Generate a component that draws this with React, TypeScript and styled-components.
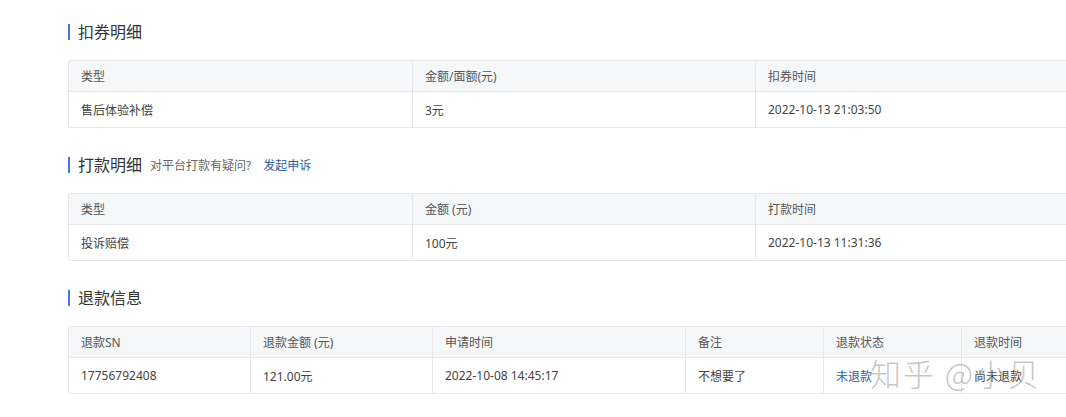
import styled, { createGlobalStyle } from "styled-components";

const GlobalStyle = createGlobalStyle`
  body {
    margin: 0;
    background: #ffffff;
    font-family: "Noto Sans", "Noto Sans CJK SC", sans-serif;
    color: #333333;
  }
`;

const Page = styled.div`
  position: relative;
  width: 1066px;
  height: 417px;
  overflow: hidden;
  padding: 22px 0 0 68px;
  box-sizing: border-box;
`;

const Section = styled.div`
  margin-bottom: 27px;
`;

const Heading = styled.div`
  display: flex;
  align-items: center;
  height: 20px;
  margin-bottom: 18px;
`;

const Title = styled.span`
  border-left: 2px solid #3d7be0;
  padding-left: 8px;
  font-size: 16px;
  line-height: 16px;
  color: #333333;
`;

const Hint = styled.span`
  margin-left: 8px;
  font-size: 12px;
  color: #666666;
`;

const HintLink = styled.a`
  margin-left: 12px;
  font-size: 12px;
  color: #2b5ca8;
  text-decoration: none;
`;

const Table = styled.table`
  width: 1032px;
  border-collapse: separate;
  border-spacing: 0;
  border: 1px solid #e6e8eb;
  border-radius: 2px;
  table-layout: fixed;
  font-size: 12px;
`;

const Th = styled.th<{ w?: number }>`
  box-sizing: border-box;
  width: ${(p) => (p.w ? `${p.w}px` : "auto")};
  height: 31px;
  padding: 0 12px;
  background: #f6f7f9;
  text-align: left;
  font-weight: normal;
  color: #555555;
  white-space: nowrap;
  border-bottom: 1px solid #e6e8eb;
  border-left: 1px solid #e6e8eb;
  &:first-child {
    border-left: none;
  }
`;

const Td = styled.td<{ link?: boolean }>`
  box-sizing: border-box;
  height: 35px;
  padding: 0 12px;
  color: ${(p) => (p.link ? "#2b5ca8" : "#444444")};
  border-left: 1px solid #e6e8eb;
  white-space: nowrap;
  &:first-child {
    border-left: none;
  }
`;

const Watermark = styled.div`
  position: absolute;
  left: 870px;
  top: 350px;
  font-size: 31px;
  letter-spacing: 2px;
  color: rgba(150, 150, 150, 0.55);
  font-family: "Noto Sans CJK SC", sans-serif;
  font-weight: 300;
  pointer-events: none;
  white-space: nowrap;
`;

type Col = { title: string; w?: number };

function DataTable({ cols, row }: { cols: Col[]; row: { text: string; link?: boolean }[] }) {
  return (
    <Table>
      <thead>
        <tr>
          {cols.map((c) => (
            <Th key={c.title} w={c.w}>
              {c.title}
            </Th>
          ))}
        </tr>
      </thead>
      <tbody>
        <tr>
          {row.map((r, i) => (
            <Td key={i} link={r.link}>
              {r.text}
            </Td>
          ))}
        </tr>
      </tbody>
    </Table>
  );
}

export default function App() {
  return (
    <>
      <GlobalStyle />
      <Page>
        <Section>
          <Heading>
            <Title>扣券明细</Title>
          </Heading>
          <DataTable
            cols={[{ title: "类型", w: 343 }, { title: "金额/面额(元)", w: 343 }, { title: "扣券时间" }]}
            row={[{ text: "售后体验补偿" }, { text: "3元" }, { text: "2022-10-13 21:03:50" }]}
          />
        </Section>
        <Section>
          <Heading>
            <Title>打款明细</Title>
            <Hint>对平台打款有疑问?</Hint>
            <HintLink href="#">发起申诉</HintLink>
          </Heading>
          <DataTable
            cols={[{ title: "类型", w: 343 }, { title: "金额 (元)", w: 343 }, { title: "打款时间" }]}
            row={[{ text: "投诉赔偿" }, { text: "100元" }, { text: "2022-10-13 11:31:36" }]}
          />
        </Section>
        <Section>
          <Heading>
            <Title>退款信息</Title>
          </Heading>
          <DataTable
            cols={[
              { title: "退款SN", w: 181 },
              { title: "退款金额 (元)", w: 182 },
              { title: "申请时间", w: 253 },
              { title: "备注", w: 138 },
              { title: "退款状态", w: 138 },
              { title: "退款时间" },
            ]}
            row={[
              { text: "17756792408" },
              { text: "121.00元" },
              { text: "2022-10-08 14:45:17" },
              { text: "不想要了" },
              { text: "未退款", link: true },
              { text: "尚未退款" },
            ]}
          />
        </Section>
        <Watermark>知乎 @小贝</Watermark>
      </Page>
    </>
  );
}
